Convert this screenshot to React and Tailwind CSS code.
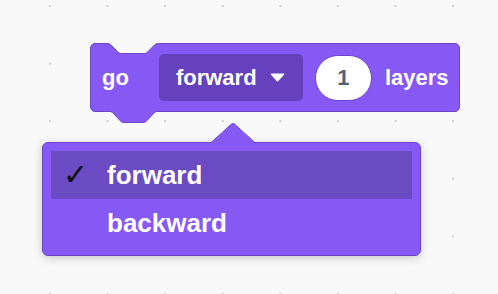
const BLOCK = '#8659f5';
const EDGE = '#6b46c6';
const PAGE = '#f9f9f9';

function TopNotch() {
    // notch cut into the top edge of the block
    return (
        <svg className="absolute top-[-1px] left-[15px]" width="56" height="12" viewBox="0 0 56 12">
            <path
                d="M-1 -1 V0.5 H1 C3 0.5 4 1 5 2 L11.5 8.5 C12.5 9.5 13.5 10.5 15.5 10.5 H38 C40 10.5 41 9.5 42 8.5 L48.5 2 C49.5 1 50.5 0.5 52.5 0.5 H57 V-1 Z"
                fill={PAGE}
                stroke={EDGE}
                strokeWidth="1"
            />
        </svg>
    );
}

function BottomTab() {
    return (
        <svg className="absolute bottom-[-13px] left-[15px]" width="56" height="14" viewBox="0 0 56 14">
            <path
                d="M0 0 H56 V1.5 H52 C50 1.5 49 2 48 3 L41.5 10 C40.5 11 39.5 12.5 37.5 12.5 H17.5 C15.5 12.5 14.5 11 13.5 10 L7 3 C6 2 5 1.5 3 1.5 H0 Z"
                fill={BLOCK}
            />
            <path
                d="M-1 1.5 H3 C5 1.5 6 2 7 3 L13.5 10 C14.5 11 15.5 12.5 17.5 12.5 H37.5 C39.5 12.5 40.5 11 41.5 10 L48 3 C49 2 50 1.5 52 1.5 H57"
                fill="none"
                stroke={EDGE}
                strokeWidth="1"
            />
        </svg>
    );
}

function MenuArrow() {
    return (
        <svg className="absolute top-[-21px] left-[167px]" width="48" height="22" viewBox="0 0 48 22">
            <path d="M0 22 L21 2.4 Q23 0.6 25 2.4 L46 22 Z" fill={BLOCK} />
            <path d="M0 21.5 L21 2.4 Q23 0.6 25 2.4 L46 21.5" fill="none" stroke={EDGE} strokeWidth="1" />
        </svg>
    );
}

export default function App() {
    return (
        <div className="w-[498px] h-[294px] overflow-hidden bg-[#f9f9f9] bg-[radial-gradient(circle,#cfcfcf_0.9px,transparent_1.4px)] bg-[length:57.6px_57.6px] bg-[position:21.2px_-22.8px] font-['Liberation_Sans',sans-serif] font-bold text-white">
            <div className="flex flex-col items-start pl-[42px] pt-[43px]">
                {/* the block */}
                <div className="relative ml-[48px] flex items-center h-[69px] w-[370px] rounded-[5px] border border-[#6b46c6] bg-[#8659f5] pl-[11px]">
                    <TopNotch />
                    <BottomTab />
                    <span className="text-[22px] leading-none">go</span>
                    <div className="ml-[30px] flex items-center justify-between h-[47px] w-[144px] rounded-[5px] bg-[#6541be] pl-[17px] pr-[18px]">
                        <span className="text-[22px] leading-none">forward</span>
                        <svg width="15" height="9" viewBox="0 0 15 9">
                            <path d="M1.5 0.5 H13.5 Q15 0.5 14 1.8 L8.6 7.8 Q7.5 9 6.4 7.8 L1 1.8 Q0 0.5 1.5 0.5 Z" fill="#ffffff" />
                        </svg>
                    </div>
                    <div className="ml-[12px] flex items-center justify-center h-[46px] w-[57px] rounded-full border border-[#6b46c6] bg-white text-[22px] leading-none text-[#575e75]">
                        1
                    </div>
                    <span className="ml-[13px] text-[22px] leading-none">layers</span>
                </div>

                {/* dropdown menu */}
                <div className="relative mt-[30px] w-[379px] rounded-[6px] border border-[#6b46c6] bg-[#8659f5] p-[8px] shadow-[0_2px_10px_rgba(0,0,0,0.2)]">
                    <MenuArrow />
                    <div className="flex items-center h-[48px] bg-[#6a4bc3]">
                        <span className="w-[56px] pl-[12px] font-['DejaVu_Sans',sans-serif] font-bold text-[30px] leading-none text-[#111111]">✓</span>
                        <span className="text-[26px] leading-none">forward</span>
                    </div>
                    <div className="flex items-center h-[48px]">
                        <span className="w-[56px]"></span>
                        <span className="text-[26px] leading-none">backward</span>
                    </div>
                </div>
            </div>
        </div>
    );
}
